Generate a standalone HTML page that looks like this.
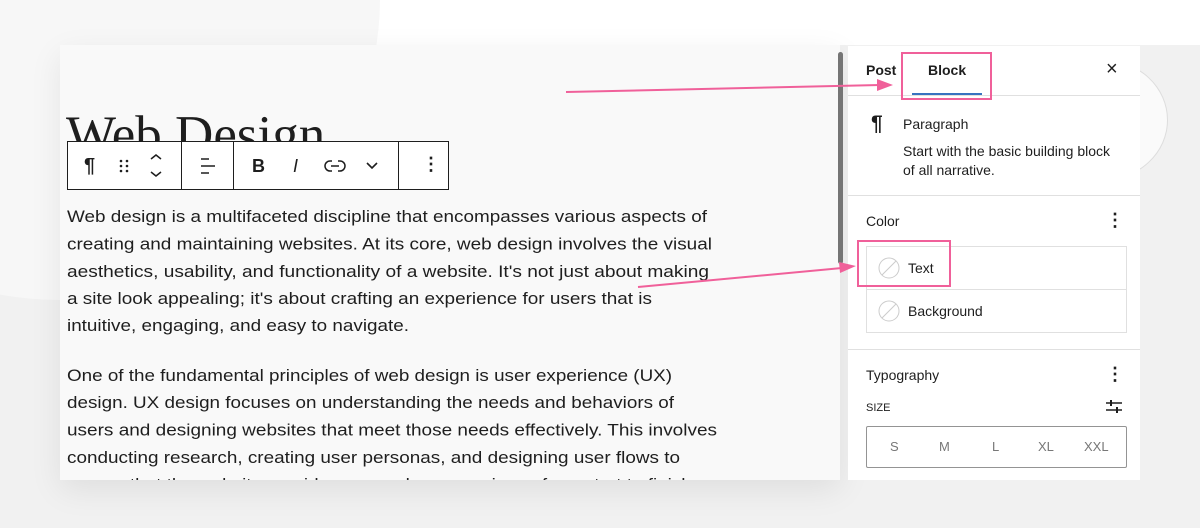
<!DOCTYPE html>
<html><head><meta charset="utf-8"><style>
*{margin:0;padding:0;box-sizing:border-box}
body{width:1200px;height:528px;overflow:hidden;background:#f1f1f1;font-family:"Liberation Sans",sans-serif;position:relative;color:#1e1e1e}
.abs{position:absolute}
.card{left:60px;top:45px;width:780px;height:435px;background:#f9f9f9;box-shadow:0 10px 30px rgba(0,0,0,.08);overflow:hidden}
.side{left:848px;top:46px;width:292px;height:434px;background:#fff}
.hr{position:absolute;left:0;width:292px;height:1px;background:#e0e0e0}
.t{position:absolute;font-size:14px}
.tb{left:7px;top:96px;width:382px;height:49px;border:1px solid #1e1e1e;background:#fff}
.sep{position:absolute;top:0;width:1px;height:47px;background:#1e1e1e}
</style></head><body>
<div class="abs" style="left:340px;top:0;width:860px;height:45px;background:#fff"></div>
<div class="abs" style="left:-260px;top:-300px;width:640px;height:600px;border-radius:50%;background:#f7f7f7"></div>
<div class="abs" style="left:1040px;top:60px;width:128px;height:120px;border-radius:50%;border:1px solid #ddd;background:#fafafa"></div>
<div class="abs card">
  <div class="abs" style="left:6px;top:60px;font-family:'Liberation Serif',serif;font-size:53px;color:#1e1e1e">Web Design</div>
  <div class="abs tb">
    <span class="t" style="left:16px;top:13px;font-size:20px;font-weight:bold">¶</span>
    <svg class="abs" style="left:50px;top:16px" width="12" height="16" fill="#1e1e1e"><circle cx="3" cy="3" r="1.3"/><circle cx="9" cy="3" r="1.3"/><circle cx="3" cy="8" r="1.3"/><circle cx="9" cy="8" r="1.3"/><circle cx="3" cy="13" r="1.3"/><circle cx="9" cy="13" r="1.3"/></svg>
    <svg class="abs" style="left:80px;top:10px" width="16" height="28"><path d="M3 7l5-4 5 4M3 20l5 4 5-4" stroke="#1e1e1e" stroke-width="1.5" fill="none"/></svg>
    <div class="sep" style="left:113px"></div>
    <svg class="abs" style="left:130px;top:14px" width="20" height="20"><path d="M3 3h8M3 10h14M3 17h8" stroke="#1e1e1e" stroke-width="1.5"/></svg>
    <div class="sep" style="left:165px"></div>
    <span class="t" style="left:184px;top:14px;font-size:18px;font-weight:bold">B</span>
    <span class="t" style="left:225px;top:14px;font-size:18px;font-style:italic">I</span>
    <svg class="abs" style="left:256px;top:15px" width="22" height="18"><path d="M8 4H6a5 5 0 0 0 0 10h2M14 4h2a5 5 0 0 1 0 10h-2M7 9h8" stroke="#1e1e1e" stroke-width="1.5" fill="none"/></svg>
    <svg class="abs" style="left:297px;top:18px" width="14" height="12"><path d="M2 3l5 5 5-5" stroke="#1e1e1e" stroke-width="1.6" fill="none"/></svg>
    <div class="sep" style="left:330px"></div>
    <span class="t" style="left:354px;top:12px;font-size:18px;font-weight:bold">⋮</span>
  </div>
</div>
<svg class="abs" style="left:0;top:0" width="840" height="480" font-family="Liberation Sans, sans-serif" font-size="17" fill="#1e1e1e">
<text x="67" y="222" textLength="640" lengthAdjust="spacingAndGlyphs">Web design is a multifaceted discipline that encompasses various aspects of</text>
<text x="67" y="249.5" textLength="645" lengthAdjust="spacingAndGlyphs">creating and maintaining websites. At its core, web design involves the visual</text>
<text x="67" y="277" textLength="642" lengthAdjust="spacingAndGlyphs">aesthetics, usability, and functionality of a website. It's not just about making</text>
<text x="67" y="304" textLength="585" lengthAdjust="spacingAndGlyphs">a site look appealing; it's about crafting an experience for users that is</text>
<text x="67" y="331" textLength="342" lengthAdjust="spacingAndGlyphs">intuitive, engaging, and easy to navigate.</text>
<text x="67" y="381" textLength="605" lengthAdjust="spacingAndGlyphs">One of the fundamental principles of web design is user experience (UX)</text>
<text x="67" y="408" textLength="607" lengthAdjust="spacingAndGlyphs">design. UX design focuses on understanding the needs and behaviors of</text>
<text x="67" y="435.5" textLength="650" lengthAdjust="spacingAndGlyphs">users and designing websites that meet those needs effectively. This involves</text>
<text x="67" y="463" textLength="613" lengthAdjust="spacingAndGlyphs">conducting research, creating user personas, and designing user flows to</text>
<text x="67" y="490" textLength="630" lengthAdjust="spacingAndGlyphs">ensure that the website provides a seamless experience from start to finish.</text>
</svg>
<div class="abs" style="left:838px;top:52px;width:5px;height:212px;background:#757575;border-radius:3px"></div>
<div class="abs side">
  <span class="t" style="left:18px;top:16px;font-weight:bold;font-size:14px">Post</span>
  <span class="t" style="left:80px;top:16px;font-weight:bold;font-size:14px">Block</span>
  <div class="abs" style="left:64px;top:47px;width:70px;height:2px;background:#3873c0"></div>
  <span class="t" style="left:258px;top:12px;font-size:20px">×</span>
  <div class="hr" style="top:49px"></div>
  <span class="t" style="left:23px;top:66px;font-size:21px;font-weight:bold">¶</span>
  <span class="t" style="left:55px;top:70px;font-size:14px">Paragraph</span>
  <div class="t" style="left:55px;top:96px;font-size:14px;line-height:19px;width:240px">Start with the basic building block<br>of all narrative.</div>
  <div class="hr" style="top:149px"></div>
  <span class="t" style="left:18px;top:167px;font-size:14px">Color</span>
  <span class="t" style="left:258px;top:164px;font-size:18px;font-weight:bold">⋮</span>
  <div class="abs" style="left:18px;top:200px;width:261px;height:87px;border:1px solid #e0e0e0"></div>
  <div class="abs" style="left:18px;top:243px;width:261px;height:1px;background:#e0e0e0"></div>
  <svg class="abs" style="left:30px;top:211px" width="22" height="22"><circle cx="11" cy="11" r="10" stroke="#ccc" fill="#fff"/><path d="M4 18L18 4" stroke="#ccc"/></svg>
  <span class="t" style="left:60px;top:214px;font-size:14px">Text</span>
  <svg class="abs" style="left:30px;top:254px" width="22" height="22"><circle cx="11" cy="11" r="10" stroke="#ccc" fill="#fff"/><path d="M4 18L18 4" stroke="#ccc"/></svg>
  <span class="t" style="left:60px;top:257px;font-size:14px">Background</span>
  <div class="hr" style="top:303px"></div>
  <span class="t" style="left:18px;top:321px;font-size:14px">Typography</span>
  <span class="t" style="left:258px;top:318px;font-size:18px;font-weight:bold">⋮</span>
  <span class="t" style="left:18px;top:356px;font-size:11px">SIZE</span>
  <svg class="abs" style="left:257px;top:353px" width="18" height="16"><path d="M1 4h16M1 11h16" stroke="#1e1e1e" stroke-width="1.5"/><path d="M6 1v6M12 8v6" stroke="#1e1e1e" stroke-width="2"/></svg>
  <div class="abs" style="left:18px;top:380px;width:261px;height:42px;border:1px solid #949494;border-radius:2px"></div>
  <span class="t" style="left:42px;top:393px;font-size:13px;color:#777">S</span>
  <span class="t" style="left:91px;top:393px;font-size:13px;color:#777">M</span>
  <span class="t" style="left:144px;top:393px;font-size:13px;color:#777">L</span>
  <span class="t" style="left:190px;top:393px;font-size:13px;color:#777">XL</span>
  <span class="t" style="left:236px;top:393px;font-size:13px;color:#777">XXL</span>
</div>
<div class="abs" style="left:901px;top:52px;width:91px;height:48px;border:2px solid #f0609a"></div>
<div class="abs" style="left:857px;top:240px;width:94px;height:47px;border:2px solid #f0609a"></div>
<svg class="abs" style="left:0;top:0" width="1200" height="528"><path d="M566 92L880 85" stroke="#f0609a" stroke-width="2"/><path d="M893 85l-16-6v12z" fill="#f0609a"/><path d="M638 287L842 268" stroke="#f0609a" stroke-width="2"/><path d="M856 266l-17-4 1 11z" fill="#f0609a"/></svg>
</body></html>
